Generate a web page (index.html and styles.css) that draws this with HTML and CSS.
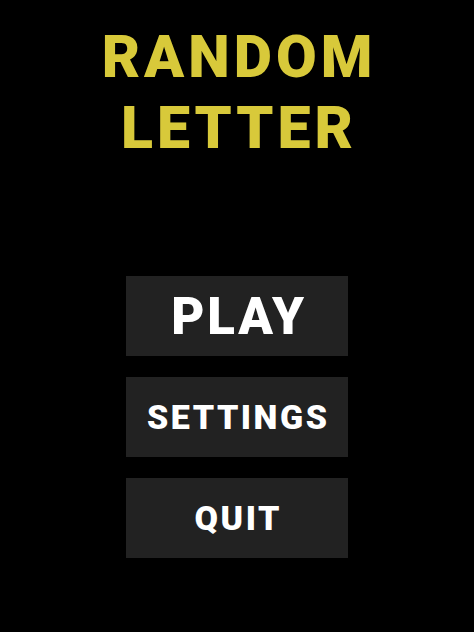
FILE: index.html
```html
<!DOCTYPE html>
<html lang="en">
<head>
  <meta charset="UTF-8">
  <meta name="viewport" content="width=device-width, initial-scale=1.0">
  <title>Random Letter</title>
  <link rel="stylesheet" href="styles.css">
</head>
<body>
  <div class="container">
    <h1 class="title">RANDOM<br>LETTER</h1>
    <div class="menu">
      <button class="menu-button play">PLAY</button>
      <button class="menu-button">SETTINGS</button>
      <button class="menu-button">QUIT</button>
    </div>
  </div>
</body>
</html>
```

FILE: styles.css
```css
body {
  margin: 0;
  background-color: #000;
  font-family: Roboto, 'Liberation Sans', Arial, sans-serif;
  color: #fff;
  text-align: center;
}

.container {
  display: flex;
  flex-direction: column;
  align-items: center;
  padding-top: 21px;
}

.title {
  margin: 0;
  padding-left: 4px;
  font-size: 59px;
  line-height: 71px;
  font-weight: 900;
  letter-spacing: 4px;
  color: #d8c93a;
}

.menu {
  display: flex;
  flex-direction: column;
  gap: 21px;
  margin-top: 113px;
}

.menu-button {
  width: 222px;
  height: 80px;
  padding: 0 0 0 2.5px;
  border: none;
  border-radius: 0;
  background-color: #222;
  color: #fff;
  font-family: Roboto, 'Liberation Sans', Arial, sans-serif;
  font-weight: 900;
  font-size: 34px;
  letter-spacing: 2.5px;
  cursor: pointer;
}

.menu-button.play {
  padding-left: 4px;
  font-size: 51px;
  letter-spacing: 2.8px;
}
```
